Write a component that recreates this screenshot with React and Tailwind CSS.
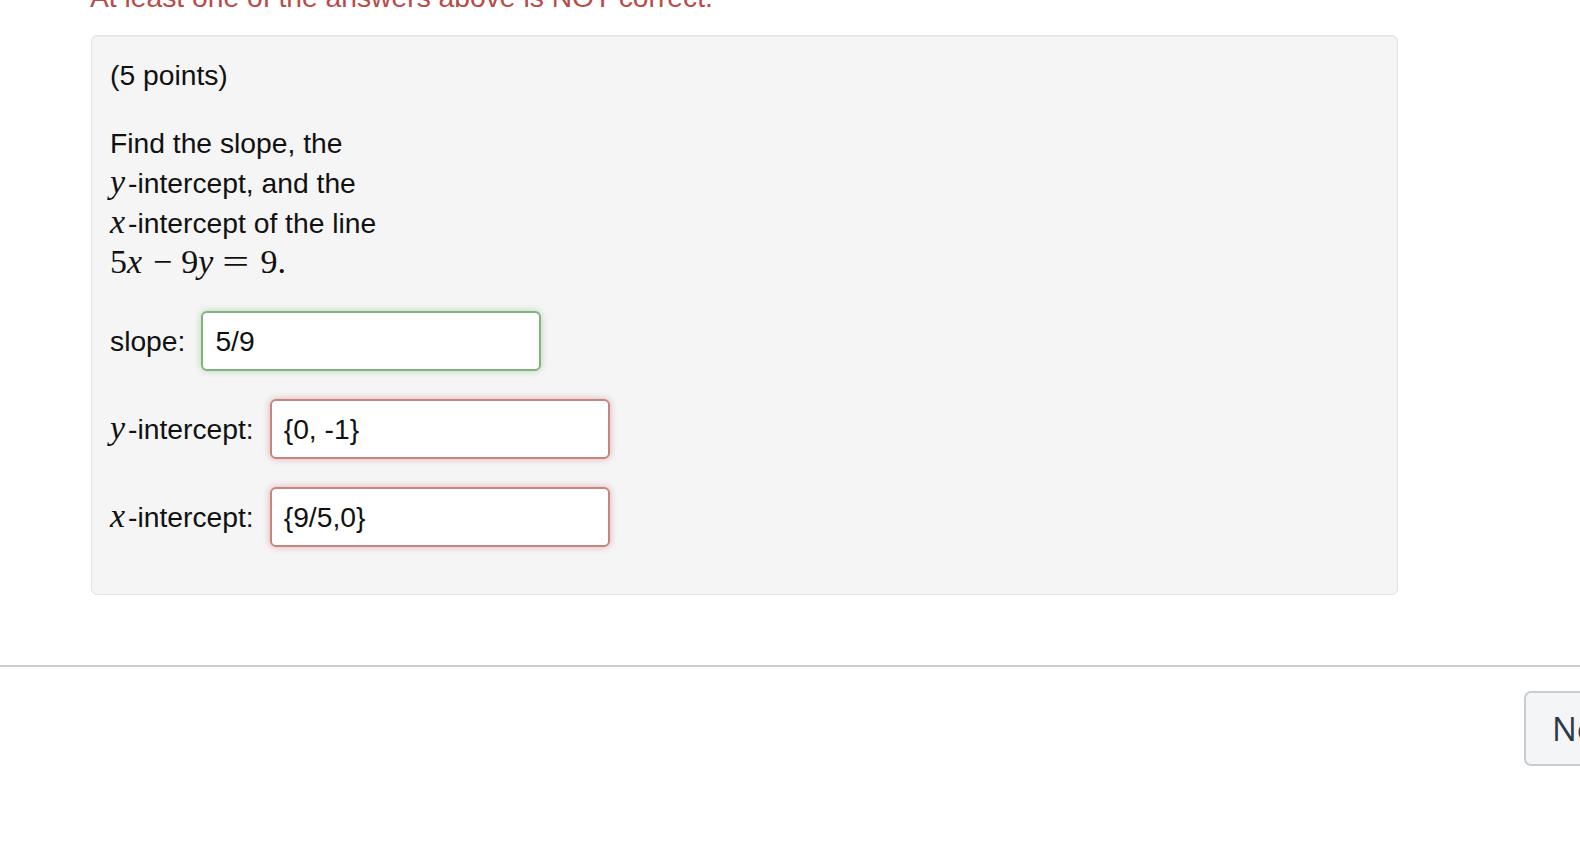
/**
 * App.jsx — WeBWorK-style problem card with answer feedback.
 */

const SANS = "font-['Liberation_Sans',Arial,sans-serif]";

function V({ children }) {
  return <span className="font-['Liberation_Serif',serif] italic text-[34px] leading-none pr-[3px]">{children}</span>;
}

function AnswerRow({ label, value, ok, className = '' }) {
  const tone = ok
    ? 'border-[#80b47f] shadow-[0_0_7px_rgba(106,170,100,0.45)]'
    : 'border-[#c98480] shadow-[0_0_7px_rgba(185,74,72,0.4)]';
  return (
    <div className={`flex items-center gap-[16px] ${className}`}>
      <span className="leading-[40px]">{label}</span>
      <input
        readOnly
        value={value}
        className={`w-[340px] h-[60px] rounded-[6px] border-2 bg-white px-[12px] text-[28.25px] text-[#111] outline-none ${tone}`}
      />
    </div>
  );
}

export default function App() {
  return (
    <div className={`h-[842px] w-full overflow-hidden bg-white text-[28.25px] leading-[40px] text-[#111] ${SANS}`}>
      <div className="ml-[90px] w-[1308px]">
        <p className="-mt-[23px] text-[#b94a48]">At least one of the answers above is NOT correct.</p>

        {/* Problem card */}
        <div className="mt-[18px] ml-px h-[560px] rounded-[6px] border border-[#e3e3e3] bg-[#f5f5f5] px-[18px] pt-[19px] shadow-[inset_0_1px_1px_rgba(0,0,0,0.05)]">
          <p>(5 points)</p>

          <p className="mt-[28px]">
            Find the slope, the
            <br />
            <V>y</V>-intercept, and the
            <br />
            <V>x</V>-intercept of the line
            <br />
            <span className="font-['Liberation_Serif',serif] text-[34px] leading-none">
              5<i>x</i>
              <span className="ml-[11px] mr-[9px]">−</span>9<i>y</i>
              <span className="ml-[13px] mr-[15px] inline-block scale-x-[1.4]">=</span>9.
            </span>
          </p>

          <AnswerRow className="mt-[28px]" label="slope:" value="5/9" ok />
          <AnswerRow className="mt-[28px]" label={<><V>y</V>-intercept:</>} value="{0, -1}" />
          <AnswerRow className="mt-[28px]" label={<><V>x</V>-intercept:</>} value="{9/5,0}" />
        </div>
      </div>

      <div className="mt-[70px] h-[2px] w-full bg-[#c9cdd1]" />

      <div className="mt-[24px] flex pl-[1524px]">
        <button className="h-[75px] shrink-0 rounded-[7px] border-2 border-[#c8cdd1] bg-[#f4f5f6] px-[26px] text-[33px] text-[#2c3a47] font-['Open_Sans',sans-serif]">
          Next
        </button>
      </div>
    </div>
  );
}
